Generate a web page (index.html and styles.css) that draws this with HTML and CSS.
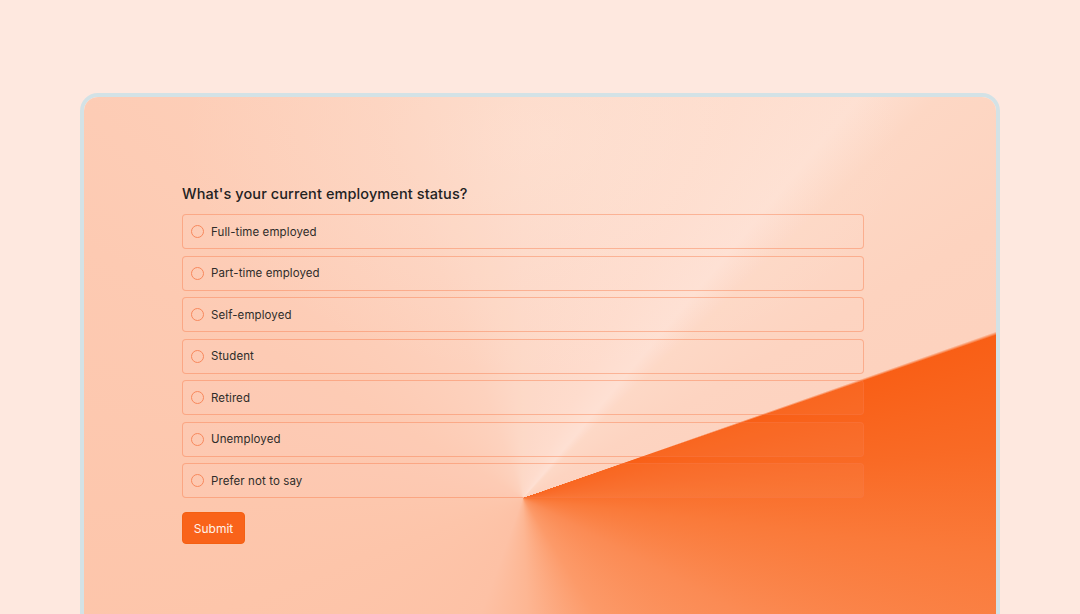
FILE: index.html
```html
<!DOCTYPE html>
<html lang="en">
<head>
<meta charset="utf-8">
<title>Employment status</title>
<link rel="stylesheet" href="styles.css">
</head>
<body>
<div class="stage">
  <div class="frame">
    <div class="card">
      <div class="sheen"></div>
      <form class="form">
        <h2 class="question">What's your current employment status?</h2>
        <div class="options">
          <label class="option"><span class="radio"></span><span class="label">Full-time employed</span></label>
          <label class="option"><span class="radio"></span><span class="label">Part-time employed</span></label>
          <label class="option"><span class="radio"></span><span class="label">Self-employed</span></label>
          <label class="option"><span class="radio"></span><span class="label">Student</span></label>
          <label class="option"><span class="radio"></span><span class="label">Retired</span></label>
          <label class="option"><span class="radio"></span><span class="label">Unemployed</span></label>
          <label class="option"><span class="radio"></span><span class="label">Prefer not to say</span></label>
        </div>
        <button type="button" class="submit">Submit</button>
      </form>
    </div>
  </div>
</div>
</body>
</html>
```

FILE: styles.css
```css
html, body {
  margin: 0;
  padding: 0;
}
body {
  background: #fee8df;
  font-family: Inter, "Noto Sans", "Liberation Sans", sans-serif;
  width: 1080px;
  height: 614px;
  overflow: hidden;
}
.stage {
  padding: 93px 80px 0 80px;
}
.frame {
  border: 4px solid #d3e2e6;
  border-radius: 18px;
  overflow: hidden;
  height: 600px;
}
.card {
  position: relative;
  height: 100%;
  border-radius: 14px;
  overflow: hidden;
  background: conic-gradient(from 0deg at 439px 401px,
    #fdd8c6 0deg,
    #fedccc 28deg,
    #fee0d2 40deg,
    #fdd7c4 46deg,
    #fdd3bf 60deg,
    #fdd2be 70.6deg,
    #f95f16 71deg,
    #f96a25 84deg,
    #fa7a3a 97deg,
    #fb8b54 118deg,
    #fc9a69 148deg,
    #fdb693 178deg,
    #fdc1a5 200deg,
    #fdc5aa 250deg,
    #fdcab2 300deg,
    #fdd1bc 340deg,
    #fdd8c6 360deg);
}
.sheen {
  position: absolute;
  left: 0;
  top: 0;
  right: 0;
  height: 420px;
  background: radial-gradient(ellipse 520px 340px at 460px 40px, rgba(255,236,226,0.3), rgba(255,236,226,0) 70%);
  pointer-events: none;
}
.form {
  position: relative;
  padding: 86px 0 0 98px;
  width: 682px;
}
.question {
  margin: 0 0 9px 0;
  font-size: 14.5px;
  line-height: 22px;
  font-weight: 500;
  color: #23221f;
  letter-spacing: 0.1px;
}
.options {
  display: flex;
  flex-direction: column;
  gap: 6.5px;
}
.option {
  display: flex;
  align-items: center;
  height: 33px;
  padding: 0 8px;
  border: 1px solid rgba(249, 120, 70, 0.42);
  border-radius: 4px;
  background: rgba(255, 240, 232, 0.05);
  gap: 7px;
}
.radio {
  box-sizing: border-box;
  width: 13px;
  height: 13px;
  border: 1.5px solid #f8885c;
  border-radius: 50%;
  flex: none;
}
.label {
  font-size: 11.5px;
  color: #2f2d2a;
  letter-spacing: 0.1px;
}
.submit {
  margin-top: 14px;
  width: 63px;
  height: 32px;
  border: 1px solid #f46012;
  border-radius: 4px;
  background: #f9631a;
  color: #fff2ea;
  font-family: Inter, "Noto Sans", "Liberation Sans", sans-serif;
  font-size: 12px;
  padding: 0;
}
```
